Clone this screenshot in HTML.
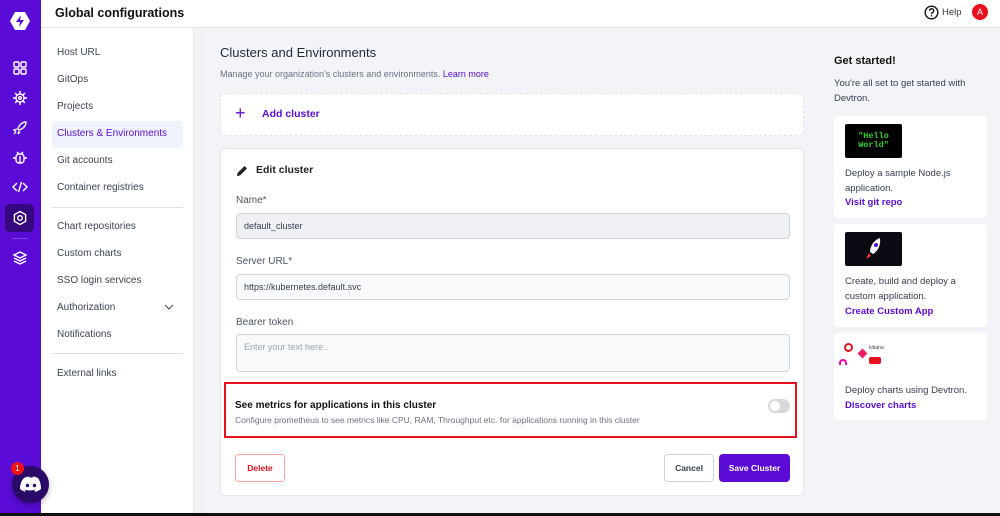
<!DOCTYPE html>
<html><head><style>
*{margin:0;padding:0;box-sizing:border-box}
body{width:1000px;height:516px;overflow:hidden;font-family:"Liberation Sans",sans-serif;background:#f2f4f7;position:relative;color:#1f2937}
.a{position:absolute}
.nav{left:0;top:0;width:41px;height:513px;background:#5a0cd6}
.ic{position:absolute;left:12px;width:16px;height:16px}
.hdr{left:41px;top:0;width:959px;height:28px;background:#fff;border-bottom:1px solid #e3e6ea}
.side{left:41px;top:28px;width:152px;height:485px;background:#fff}
.sb{left:193px;top:28px;width:10px;height:485px;background:#f1f1f1;border-left:1px solid #e6e6e6}
.si{position:absolute;left:16px;font-size:10px;color:#3b4453}
.card{background:#fff;border-radius:5px}
.lbl{position:absolute;left:15px;font-size:10px;color:#4b5563}
.inp{position:absolute;left:15px;width:554px;height:26px;border:1px solid #d0d4d9;border-radius:4px;background:#f8f9fa;font-size:9px;color:#374151;padding:7px 7px}
.rc{position:absolute;left:834px;width:153px;background:#fff;border-radius:4px}
.rc p{position:absolute;left:11px;font-size:9.5px;color:#374151;line-height:15px}
.rc b{position:absolute;left:11px;font-size:9.5px;color:#5a0cd6}
</style></head><body>
<div class="a nav">
<svg class="a" style="left:9px;top:10px" width="22" height="22" viewBox="0 0 22 22"><path d="M6 2h10l5 9-5 9H6L1 11z" fill="#fff"/><path d="M12 5l-5 7h4l-1 5 5-7h-4z" fill="#5a0cd6"/></svg>
<svg class="ic" style="top:60px" viewBox="0 0 16 16" fill="none" stroke="#fff" stroke-width="1.4"><rect x="2" y="2" width="5" height="5" rx="1"/><rect x="9" y="2" width="5" height="5" rx="1"/><rect x="2" y="9" width="5" height="5" rx="1"/><rect x="9" y="9" width="5" height="5" rx="1"/></svg>
<svg class="ic" style="top:90px" viewBox="0 0 16 16" fill="none" stroke="#fff" stroke-width="1.4"><circle cx="8" cy="8" r="4"/><circle cx="8" cy="8" r="1.3"/><path d="M8 1v3M8 12v3M1 8h3M12 8h3M3 3l2 2M11 11l2 2M13 3l-2 2M5 11l-2 2"/></svg>
<svg class="ic" style="top:120px" viewBox="0 0 16 16" fill="none" stroke="#fff" stroke-width="1.4"><path d="M14 2c-4 0-7 3-8 7l1 1c4-1 7-4 7-8zM5 9l-3 1 2 2M7 11l-1 3 2-2M4 12l-2 2"/></svg>
<svg class="ic" style="top:149px" viewBox="0 0 16 16" fill="none" stroke="#fff" stroke-width="1.4"><rect x="4" y="5" width="8" height="9" rx="3"/><path d="M5 3l2 2M11 3l-2 2M4 9H1M15 9h-3M8 7v7"/></svg>
<svg class="ic" style="top:179px" viewBox="0 0 16 16" fill="none" stroke="#fff" stroke-width="1.4"><path d="M5 4L1 8l4 4M11 4l4 4-4 4M9.5 3l-3 10"/></svg>
<div class="a" style="left:5px;top:204px;width:29px;height:28px;background:#36087f;border-radius:5px"></div>
<svg class="ic" style="top:210px" viewBox="0 0 16 16" fill="none" stroke="#fff" stroke-width="1.4"><path d="M8 1.5l5.6 3.2v6.6L8 14.5l-5.6-3.2V4.7z"/><circle cx="8" cy="8" r="2.3"/></svg>
<div class="a" style="left:12px;top:238px;width:16px;height:1px;background:#7c4de0"></div>
<svg class="ic" style="top:250px" viewBox="0 0 16 16" fill="none" stroke="#fff" stroke-width="1.4"><path d="M8 2l6 3-6 3-6-3zM2 8l6 3 6-3M2 11l6 3 6-3"/></svg>
</div>

<div class="a hdr"><div class="a" style="left:14px;top:6px;font-size:12.5px;font-weight:bold;color:#111">Global configurations</div>
<svg class="a" style="left:883px;top:5px" width="15" height="15" viewBox="0 0 15 15"><circle cx="7.5" cy="7.5" r="6.3" fill="none" stroke="#111" stroke-width="1.4"/><path d="M5.6 5.8a2 2 0 1 1 2.6 1.9c-.5.2-.7.5-.7 1v.5" fill="none" stroke="#111" stroke-width="1.3"/><circle cx="7.5" cy="10.8" r=".8" fill="#111"/></svg>
<div class="a" style="left:901px;top:7px;font-size:9.5px;color:#333">Help</div>
<div class="a" style="left:931px;top:4px;width:16px;height:16px;border-radius:50%;background:#e8101d;color:#fff;font-size:9px;text-align:center;line-height:16px">A</div>
</div>

<div class="a side">
<div class="si" style="top:19px">Host URL</div>
<div class="si" style="top:46px">GitOps</div>
<div class="si" style="top:73px">Projects</div>
<div class="a" style="left:11px;top:93px;width:131px;height:27px;background:#eef3fc;border-radius:4px"></div>
<div class="si" style="top:100px;color:#5a0cd6">Clusters &amp; Environments</div>
<div class="si" style="top:127px">Git accounts</div>
<div class="si" style="top:154px">Container registries</div>
<div class="a" style="left:11px;top:179px;width:131px;height:1px;background:#dde1e6"></div>
<div class="si" style="top:193px">Chart repositories</div>
<div class="si" style="top:220px">Custom charts</div>
<div class="si" style="top:247px">SSO login services</div>
<div class="si" style="top:274px">Authorization</div>
<svg class="a" style="left:123px;top:276px" width="10" height="7" viewBox="0 0 10 7"><path d="M1 1l4 4 4-4" fill="none" stroke="#555" stroke-width="1.2"/></svg>
<div class="si" style="top:301px">Notifications</div>
<div class="a" style="left:11px;top:325px;width:131px;height:1px;background:#dde1e6"></div>
<div class="si" style="top:340px">External links</div>
</div>
<div class="a sb"></div>

<div class="a" style="left:12px;top:466px;width:37px;height:37px;border-radius:50%;background:#2a0a66;box-shadow:0 2px 6px rgba(0,0,0,.3)"></div>
<svg class="a" style="left:20px;top:476px" width="22" height="17" viewBox="0 0 22 17"><path d="M4 2c2-1 4-1.5 5-1.5l.5 1h3l.5-1c1 0 3 .5 5 1.5 2 3 3 7 3 11-2 1.5-4 2.5-5.5 3l-1.2-2c1-.3 1.7-.7 2.3-1-4 2-10 2-14 0 .6.3 1.3.7 2.3 1L5.5 16C4 15.5 2 14.5 0 13 0 9 1 5 4 2z" fill="#fff"/><circle cx="7.5" cy="9.5" r="1.7" fill="#2a0a66"/><circle cx="14.5" cy="9.5" r="1.7" fill="#2a0a66"/></svg>
<div class="a" style="left:11px;top:462px;width:13px;height:13px;border-radius:50%;background:#e11;color:#fff;font-size:8px;text-align:center;line-height:13px">1</div>

<div class="a" style="left:220px;top:45px;font-size:13px;color:#1f2937">Clusters and Environments</div>
<div class="a" style="left:220px;top:69px;font-size:9px;color:#6b7280">Manage your organization's clusters and environments. <span style="color:#5a0cd6">Learn more</span></div>

<div class="a card" style="left:220px;top:93px;width:584px;height:43px;border:1px dashed #dfe3e8"></div>
<div class="a" style="left:235px;top:104px;font-size:18px;color:#5a0cd6;line-height:18px">+</div>
<div class="a" style="left:262px;top:108px;font-size:10.5px;font-weight:bold;color:#5a0cd6">Add cluster</div>

<div class="a card" style="left:220px;top:148px;width:584px;height:348px;border:1px solid #e3e6ea">
<svg class="a" style="left:15px;top:16px" width="12" height="12" viewBox="0 0 12 12"><path d="M1 11l.5-3L8.5 1 11 3.5 4 10.5z" fill="#222"/></svg>
<div class="a" style="left:35px;top:15px;font-size:10.5px;font-weight:bold;color:#222">Edit cluster</div>
<div class="lbl" style="top:46px">Name*</div>
<div class="inp" style="top:64px;background:#eef0f3">default_cluster</div>
<div class="lbl" style="top:107px">Server URL*</div>
<div class="inp" style="top:125px">https://kubernetes.default.svc</div>
<div class="lbl" style="top:168px">Bearer token</div>
<div class="inp" style="top:185px;height:38px;color:#9ca3af">Enter your text here..</div>
<div class="a" style="left:3px;top:233px;width:573px;height:56px;border:2px solid #e8101d"></div>
<div class="a" style="left:14px;top:251px;font-size:10px;font-weight:bold;color:#111">See metrics for applications in this cluster</div>
<div class="a" style="left:14px;top:266px;font-size:8.5px;color:#6b7280">Configure prometheus to see metrics like CPU, RAM, Throughput etc. for applications running in this cluster</div>
<div class="a" style="left:547px;top:250px;width:22px;height:14px;border-radius:7px;background:#d6d8db"><div class="a" style="left:2px;top:2px;width:10px;height:10px;border-radius:50%;background:#fff"></div></div>
<div class="a" style="left:14px;top:305px;width:50px;height:28px;border:1px solid #fca5a5;border-radius:4px;color:#e8101d;font-size:8.5px;font-weight:bold;text-align:center;line-height:26px">Delete</div>
<div class="a" style="left:443px;top:305px;width:50px;height:28px;border:1px solid #d0d4d9;border-radius:4px;color:#374151;font-size:8.5px;font-weight:bold;text-align:center;line-height:26px">Cancel</div>
<div class="a" style="left:498px;top:305px;width:71px;height:28px;background:#5a0cd6;border-radius:4px;color:#fff;font-size:8.5px;font-weight:bold;text-align:center;line-height:28px">Save Cluster</div>
</div>

<div class="a" style="left:834px;top:55px;font-size:11px;font-weight:bold;color:#111">Get started!</div>
<div class="a" style="left:834px;top:76px;font-size:9.5px;color:#374151;line-height:15px;width:150px">You're all set to get started with Devtron.</div>
<div class="rc" style="top:116px;height:102px">
<div class="a" style="left:11px;top:8px;width:57px;height:34px;background:#000;border-radius:2px;color:#2bd12b;font-family:'Liberation Mono',monospace;font-size:8.5px;font-weight:bold;text-align:center;line-height:9px;padding-top:8px">"Hello<br>World"</div>
<p style="top:50px">Deploy a sample Node.js<br>application.</p><b style="top:81px">Visit git repo</b></div>
<div class="rc" style="top:224px;height:103px">
<div class="a" style="left:11px;top:8px;width:57px;height:34px;background:#0b0b14;border-radius:2px"><svg class="a" style="left:18px;top:4px" width="22" height="26" viewBox="0 0 22 26"><path d="M17 2c-6 2-10 8-10 14l3 2c5-3 8-9 7-16z" fill="#fff"/><circle cx="13" cy="9" r="2" fill="#5a0cd6"/><path d="M6 17l-3 6 5-3z" fill="#f33"/></svg></div>
<p style="top:50px">Create, build and deploy a<br>custom application.</p><b style="top:82px">Create Custom App</b></div>
<div class="rc" style="top:333px;height:87px">
<div class="a" style="left:10px;top:10px;width:9px;height:9px;border-radius:50%;border:2px solid #e8101d"></div>
<div class="a" style="left:25px;top:17px;width:7px;height:7px;background:#e91e63;transform:rotate(45deg)"></div>
<div class="a" style="left:35px;top:12px;font-size:5px;color:#444">kibana</div>
<div class="a" style="left:35px;top:24px;width:12px;height:7px;background:#e8101d;border-radius:2px"></div>
<div class="a" style="left:5px;top:26px;width:8px;height:6px;border:2px solid #f0a;border-bottom:none;border-radius:6px 6px 0 0"></div>
<p style="top:50px">Deploy charts using Devtron.</p><b style="top:67px">Discover charts</b></div>

<div class="a" style="left:0;top:513px;width:1000px;height:3px;background:#111"></div>
</body></html>
